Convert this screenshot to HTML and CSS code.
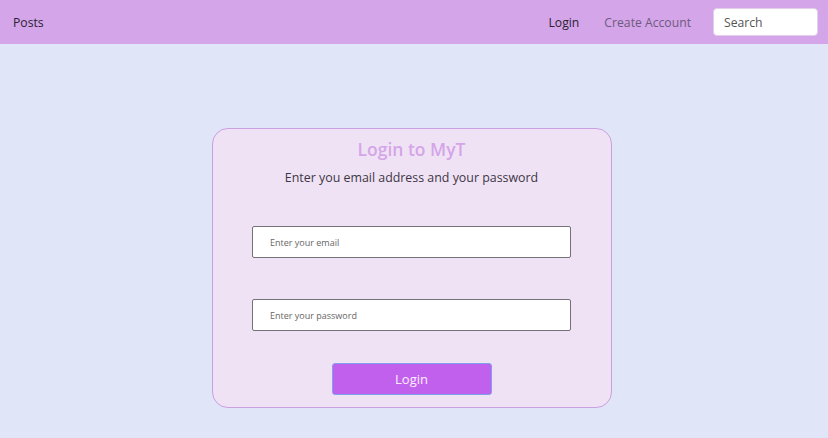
FILE: index.html
```html
<!DOCTYPE html>
<html>
<head>
<meta charset="utf-8">
<link rel="stylesheet" href="styles.css">
</head>
<body>
<nav class="navbar">
  <a class="brand" href="#">Posts</a>
  <div class="nav-right">
    <a class="nav-link active" href="#">Login</a>
    <a class="nav-link" href="#">Create Account</a>
    <input class="search" type="text" placeholder="Search">
  </div>
</nav>
<main class="main">
  <form class="card">
    <h1 class="title">Login to MyT</h1>
    <p class="subtitle">Enter you email address and your password</p>
    <input class="field field-email" type="email" placeholder="Enter your email">
    <input class="field field-pass" type="password" placeholder="Enter your password">
    <button class="btn" type="button">Login</button>
  </form>
</main>
</body>
</html>
```
FILE: styles.css
```css
* { box-sizing: border-box; }
html, body { margin: 0; padding: 0; }
body {
  background: #e0e5f8;
  font-family: "Open Sans", "Noto Sans", sans-serif;
  width: 828px;
  height: 438px;
  overflow: hidden;
}
.navbar {
  height: 44px;
  background: #d4a5e8;
  display: flex;
  align-items: center;
  justify-content: space-between;
  padding: 0 10px 0 13px;
}
.brand {
  color: #2b1f33;
  text-decoration: none;
  font-size: 12.2px;
}
.nav-right {
  display: flex;
  align-items: center;
}
.nav-link {
  text-decoration: none;
  font-size: 12.2px;
  color: #6e5a7e;
  margin-right: 22px;
}
.nav-link.active { color: #2b1f33; margin-right: 25px; }
.search {
  width: 105px;
  height: 28px;
  border: 1px solid #e0d0ea;
  border-radius: 4px;
  background: #fff;
  padding: 0 10px;
  font-family: inherit;
  font-size: 12.2px;
}
.search::placeholder { color: #555; }
.main {
  display: flex;
  justify-content: center;
  padding-top: 84px;
  padding-right: 4px;
}
.card {
  width: 400px;
  height: 280px;
  background: #f0e2f5;
  border: 1px solid #c9a0e0;
  border-radius: 16px;
  display: flex;
  flex-direction: column;
  align-items: center;
  padding-right: 1px;
}
.title {
  margin: 7px 0 0;
  font-size: 17.5px;
  font-weight: 600;
  color: #d4a5e8;
  line-height: 26px;
}
.subtitle {
  margin: 7px 0 0;
  font-size: 12.4px;
  color: #3c3744;
  line-height: 18px;
}
.field {
  width: 319px;
  height: 32px;
  border: 1px solid #767078;
  border-radius: 2px;
  background: #fff;
  padding: 0 17px;
  font-family: inherit;
  font-size: 9px;
}
.field::placeholder { color: #666; }
.field-email { margin-top: 39px; }
.field-pass { margin-top: 41px; }
.btn {
  margin-top: 32px;
  width: 160px;
  height: 32px;
  background: #c260ee;
  border: 1px solid #7fa0ea;
  border-radius: 3px;
  color: #fbeefe;
  font-family: inherit;
  font-size: 13px;
}
```
